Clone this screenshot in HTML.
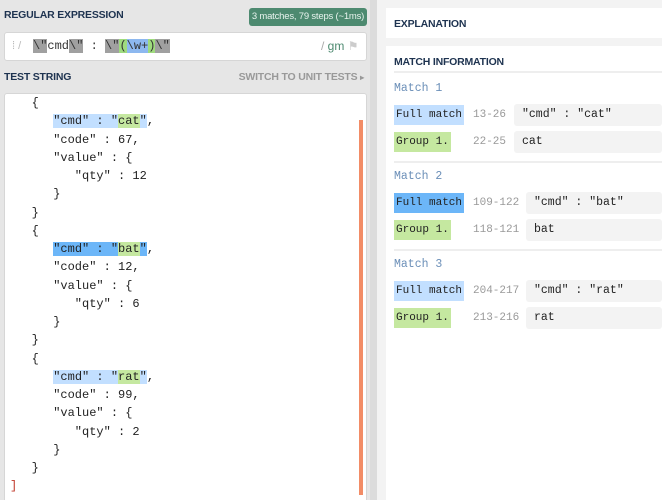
<!DOCTYPE html>
<html style="overflow:hidden;height:500px"><head><style>
*{margin:0;padding:0;box-sizing:border-box}
body{width:662px;height:500px;overflow:hidden;background:#f3f3f3;font-family:"Liberation Sans",sans-serif;position:relative}
.left{position:absolute;left:0;top:0;width:370px;height:500px;background:#e6e6e6}
.div{position:absolute;left:370px;top:0;width:7px;height:500px;background:#dcdcdc}
.h{position:absolute;font-weight:bold;font-size:10.5px;color:#1e3350;white-space:nowrap;letter-spacing:-0.2px}
.badge{position:absolute;left:249px;top:8px;width:118px;height:18px;background:#4d8a70;border-radius:3px;color:#e8f3ee;font-size:9.5px;text-align:center;line-height:18px;white-space:nowrap;letter-spacing:-0.2px}
.rx{position:absolute;left:4px;top:32px;width:363px;height:29px;background:#fff;border:1px solid #d6d6d6;border-radius:3px;font-family:"Liberation Mono",monospace;font-size:12px;line-height:27px}
.g{background:#a0a0a0}.gr{background:#9fdb7e}.bl{background:#8db8ef}
.ts{position:absolute;left:4px;top:93px;width:363px;height:420px;background:#fff;border:1px solid #d6d6d6;border-radius:3px}
.code{position:absolute;left:10px;top:94px;font-family:"Liberation Mono",monospace;font-size:12px;line-height:18.25px;white-space:pre;color:#222}
.m1{background:#c2dfff}.m2{background:#6cb6f8}.gg{background:#c5e8a0}
.sb{position:absolute;left:359px;top:120px;width:4px;height:375px;background:#f28c66}
.card{position:absolute;left:386px;background:#fff;width:276px}
.mi{font-family:"Liberation Mono",monospace;font-size:11px}
.mt{position:absolute;left:394px;color:#6b8fb8;font-size:11.5px}
.lab{position:absolute;left:394px;height:20px;line-height:20px;padding:0 2px;color:#222}
.rng{position:absolute;left:473px;color:#999;line-height:20px}
.val{position:absolute;left:514px;width:148px;height:22px;background:#f3f3f3;border-radius:3px;line-height:22px;padding-left:8px;color:#222;font-size:11.5px}
.v2{left:526px;width:136px}
.hr{position:absolute;left:394px;width:268px;height:2px;background:#eee}
</style></head><body>
<div class="left"></div><div class="div"></div>
<div class="h" style="left:4px;top:9px">REGULAR EXPRESSION</div>
<div class="badge">3 matches, 79 steps (~1ms)</div>
<div class="rx"><span style="position:absolute;left:7px;color:#bbb;font-family:'Liberation Sans';font-size:11px">⁞ /</span><span style="position:absolute;left:28px;color:#333"><span class="g">\"</span>cmd<span class="g">\"</span> : <span class="g">\"</span><span class="gr">(</span><span class="bl">\w+</span><span class="gr">)</span><span class="g">\"</span></span><span style="position:absolute;left:316px;color:#aaa;font-family:'Liberation Sans'">/ <span style="color:#4d8a70">gm</span> <span style="color:#ccc">⚑</span></span></div>
<div class="h" style="left:4px;top:71px">TEST STRING</div>
<div class="h" style="right:298px;top:71px;color:#999">SWITCH TO UNIT TESTS <span style="font-size:8px">▸</span></div>
<div class="ts"></div>
<div class="code">   {
      <span class="m1">"cmd" : "<span class="gg">cat</span>"</span>,
      "code" : 67,
      "value" : {
         "qty" : 12
      }
   }
   {
      <span class="m2">"cmd" : "<span class="gg">bat</span>"</span>,
      "code" : 12,
      "value" : {
         "qty" : 6
      }
   }
   {
      <span class="m1">"cmd" : "<span class="gg">rat</span>"</span>,
      "code" : 99,
      "value" : {
         "qty" : 2
      }
   }
<span style="color:#c0392b">]</span></div>
<div class="sb"></div>
<div class="card" style="top:8px;height:30px"></div>
<div class="h" style="left:394px;top:18px">EXPLANATION</div>
<div class="card" style="top:46px;height:460px"></div>
<div class="h" style="left:394px;top:56px">MATCH INFORMATION</div>
<div class="hr" style="top:71px"></div>
<div class="mi">
<div class="mt" style="top:82px">Match 1</div>
<div class="lab" style="top:105px;background:#c2dfff">Full match</div><div class="rng" style="top:105px">13-26</div><div class="val" style="top:104px">"cmd" : "cat"</div>
<div class="lab" style="top:132px;background:#c5e8a0">Group 1.</div><div class="rng" style="top:132px">22-25</div><div class="val" style="top:131px">cat</div>
<div class="hr" style="top:161px"></div>
<div class="mt" style="top:170px">Match 2</div>
<div class="lab" style="top:193px;background:#6cb6f8">Full match</div><div class="rng" style="top:193px">109-122</div><div class="val v2" style="top:192px">"cmd" : "bat"</div>
<div class="lab" style="top:220px;background:#c5e8a0">Group 1.</div><div class="rng" style="top:220px">118-121</div><div class="val v2" style="top:219px">bat</div>
<div class="hr" style="top:249px"></div>
<div class="mt" style="top:258px">Match 3</div>
<div class="lab" style="top:281px;background:#c2dfff">Full match</div><div class="rng" style="top:281px">204-217</div><div class="val v2" style="top:280px">"cmd" : "rat"</div>
<div class="lab" style="top:308px;background:#c5e8a0">Group 1.</div><div class="rng" style="top:308px">213-216</div><div class="val v2" style="top:307px">rat</div>
</div>
</body></html>
